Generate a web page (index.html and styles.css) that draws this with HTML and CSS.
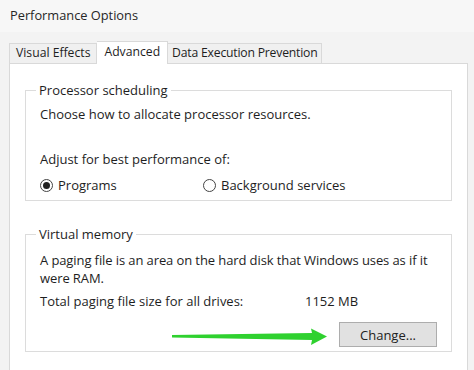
FILE: index.html
```html
<!DOCTYPE html>
<html>
<head>
<meta charset="utf-8">
<link rel="stylesheet" href="styles.css">
</head>
<body>
<div class="window">
  <div class="titlebar">Performance Options</div>
  <div class="client">
    <div class="tabs">
      <div class="tab tab-first">Visual Effects</div>
      <div class="tab active">Advanced</div>
      <div class="tab tab-dep">Data Execution Prevention</div>
    </div>
    <div class="panel">
      <fieldset class="group group-cpu">
        <legend>Processor scheduling</legend>
        <p class="line line-choose">Choose how to allocate processor resources.</p>
        <p class="line line-adjust">Adjust for best performance of:</p>
        <div class="radios">
          <label class="radio radio-programs"><span class="dot checked"></span>Programs</label>
          <label class="radio"><span class="dot"></span>Background services</label>
        </div>
      </fieldset>
      <fieldset class="group group-vm">
        <legend>Virtual memory</legend>
        <p class="line line-desc">A paging file is an area on the hard disk that Windows uses as if it<br>were RAM.</p>
        <div class="line total"><span class="total-label">Total paging file size for all drives:</span><span class="total-value">1152 MB</span></div>
        <div class="actions">
          <svg class="arrow" width="158" height="20" viewBox="0 0 158 20">
            <polygon points="0,8 140,6 139,1.5 155,9.5 139,18 140,13 0,10.5" fill="#2fd12f"/>
          </svg>
          <button class="btn">Change...</button>
        </div>
      </fieldset>
    </div>
  </div>
</div>
</body>
</html>
```
FILE: styles.css
```css
html, body {
  margin: 0;
  padding: 0;
}
body {
  width: 474px;
  height: 370px;
  overflow: hidden;
  background: #f3f3f3;
  font-family: "Open Sans", "Noto Sans", sans-serif;
  font-size: 13px;
  color: #1e1e1e;
}
.window {
  display: flex;
  flex-direction: column;
  height: 370px;
}
.titlebar {
  height: 32px;
  line-height: 30px;
  padding-left: 10px;
  font-size: 12.8px;
  color: #262626;
  background: #f7f7f7;
  flex: none;
}
.client {
  padding-left: 9px;
  padding-right: 6px;
  flex: 1;
  display: flex;
  flex-direction: column;
  min-height: 0;
}
.tabs {
  display: flex;
  align-items: flex-end;
  height: 31px;
  position: relative;
  z-index: 1;
  font-size: 12.2px;
  flex: none;
}
.tab {
  height: 19px;
  line-height: 18px;
  padding: 0 6px;
  border: 1px solid #d9d9d9;
  border-bottom: none;
  border-left: none;
  background: #f0f0f0;
}
.tab-first {
  border-left: 1px solid #d9d9d9;
}
.tab-dep {
  padding: 0 4px;
  letter-spacing: -0.2px;
}
.tab.active {
  height: 22px;
  line-height: 19px;
  background: #ffffff;
  margin-bottom: -1px;
  padding: 0 7px;
}
.panel {
  background: #ffffff;
  border: 1px solid #d9d9d9;
  border-bottom: none;
  flex: 1;
  min-height: 0;
  padding: 17px 15px 0 15px;
  display: flex;
  flex-direction: column;
  gap: 24px;
}
.group {
  margin: 0;
  border: 1px solid #dcdcdc;
  padding: 0 2px 0 14px;
  min-width: 0;
}
.group legend {
  padding: 0 3px;
  margin-left: -4px;
  line-height: 18px;
}
.line {
  margin: 0;
  line-height: 18px;
}
.line-choose {
  margin-top: 6px;
}
.line-adjust {
  margin-top: 27px;
}
.radios {
  display: flex;
  margin-top: 8px;
  height: 30px;
}
.radio {
  display: flex;
  align-items: center;
  gap: 5px;
  height: 18px;
}
.radio-programs {
  width: 163px;
}
.dot {
  width: 11px;
  height: 11px;
  border: 1px solid #444;
  border-radius: 50%;
  box-sizing: content-box;
  display: inline-flex;
  align-items: center;
  justify-content: center;
}
.dot.checked::after {
  content: "";
  width: 7px;
  height: 7px;
  border-radius: 50%;
  background: #222;
}
.group-cpu {
  height: 120px;
  box-sizing: border-box;
}
.group-vm {
  height: 127px;
  box-sizing: border-box;
}
.line-desc {
  margin-top: 8px;
  white-space: nowrap;
  letter-spacing: -0.1px;
}
.total {
  margin-top: 5px;
  display: flex;
}
.total-label {
  width: 265px;
}
.actions {
  display: flex;
  justify-content: flex-end;
  align-items: center;
  margin-top: 12px;
  margin-right: 12px;
  gap: 9px;
}
.arrow {
  display: block;
  margin-top: 4px;
}
.btn {
  width: 98px;
  height: 25px;
  font: inherit;
  color: #222;
  background: #e1e1e1;
  border: 1px solid #adadad;
  padding: 0;
}
```
